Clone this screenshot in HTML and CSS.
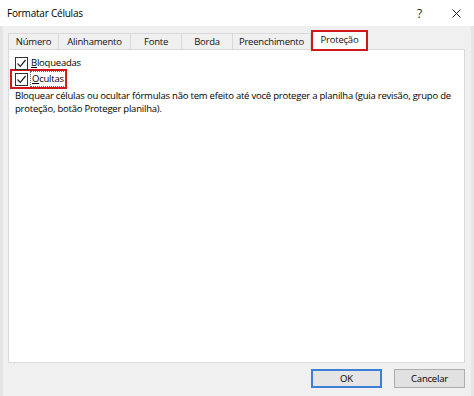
FILE: index.html
```html
<!DOCTYPE html>
<html lang="pt-BR">

<head>
  <meta charset="UTF-8">
  <title>Formatar Células</title>
  <link rel="stylesheet" href="styles.css">
</head>

<body>
  <div class="dialog">
    <div class="titlebar">
      <span class="title">Formatar Células</span>
      <span class="help">?</span>
      <span class="close">
        <svg width="9" height="9" viewBox="0 0 9 9">
          <path d="M0.5 0.5 L8.5 8.5 M8.5 0.5 L0.5 8.5" stroke="#1a1a1a" stroke-width="1" fill="none" />
        </svg>
      </span>
    </div>

    <div class="content">
      <div class="tabs">
        <div class="tab">Número</div>
        <div class="tab">Alinhamento</div>
        <div class="tab">Fonte</div>
        <div class="tab">Borda</div>
        <div class="tab">Preenchimento</div>
        <div class="tab active">Proteção</div>
      </div>

      <div class="panel">
        <div class="option">
          <span class="box">
            <svg width="11" height="11" viewBox="0 0 11 11">
              <path d="M1.5 5.5 L4.2 8.3 L9.6 2" stroke="#222" stroke-width="1.2" fill="none" />
            </svg>
          </span>
          <span class="label"><u>B</u>loqueadas</span>
        </div>
        <div class="option marked">
          <span class="box">
            <svg width="11" height="11" viewBox="0 0 11 11">
              <path d="M1.5 5.5 L4.2 8.3 L9.6 2" stroke="#222" stroke-width="1.2" fill="none" />
            </svg>
          </span>
          <span class="label focus"><u>O</u>cultas</span>
        </div>
        <p class="note">Bloquear células ou ocultar fórmulas não tem efeito até você proteger a planilha (guia revisão, grupo de proteção, botão Proteger planilha).</p>
      </div>

      <div class="buttons">
        <button class="btn default">OK</button>
        <button class="btn">Cancelar</button>
      </div>
    </div>
  </div>
</body>

</html>
```

FILE: styles.css
```css
body {
  margin: 0;
  font-family: "Open Sans", "Noto Sans", sans-serif;
  font-size: 9.5px;
  letter-spacing: -0.22px;
  color: #000000;
  background-color: #ffffff;
}

.dialog {
  width: 474px;
  height: 396px;
  background-color: #f0f0f0;
  box-sizing: border-box;
  border-left: 3px solid #e4e4e4;
  border-right: 3px solid #e6e6e6;
}

.titlebar {
  height: 26px;
  background-color: #ffffff;
  display: flex;
  align-items: center;
  margin: 0 -3px;
  padding-left: 7px;
  font-size: 10px;
}

.title {
  flex: 1;
}

.help {
  width: 7px;
  margin-right: 28px;
  font-size: 12px;
  color: #222;
}

.close {
  width: 9px;
  height: 9px;
  margin-right: 13px;
  display: flex;
}

.content {
  padding: 6px 6px 0 5px;
}

.tabs {
  display: flex;
  align-items: flex-end;
  height: 17px;
}

.tab {
  height: 16px;
  line-height: 15px;
  box-sizing: border-box;
  text-align: center;
  border: 1px solid #d9d9d9;
  border-bottom: none;
  border-right: none;
  background-color: #f0f0f0;
  color: #111;
}

.tab:nth-child(1) { width: 50px; }
.tab:nth-child(2) { width: 72px; }
.tab:nth-child(3) { width: 51px; }
.tab:nth-child(4) { width: 51px; }
.tab:nth-child(5) { width: 79px; border-right: 1px solid #d9d9d9; }

.tab.active {
  width: 57px;
  height: 21px;
  line-height: 16px;
  background-color: #ffffff;
  border: 2px solid #d1161c;
  margin-bottom: -2px;
  position: relative;
  z-index: 1;
}

.panel {
  height: 314px;
  box-sizing: border-box;
  background-color: #ffffff;
  border: 1px solid #d9d9d9;
  padding: 7px 1px 0 6px;
}

.option {
  display: flex;
  align-items: center;
  height: 12px;
  gap: 3px;
}

.option.marked {
  width: 57px;
  height: 20px;
  box-sizing: border-box;
  border: 2px solid #d1161c;
  margin-left: -5px;
  padding-left: 3px;
}

.box {
  width: 13px;
  height: 13px;
  flex: none;
  box-sizing: border-box;
  border: 1px solid #333333;
  display: flex;
  align-items: center;
  justify-content: center;
  background: #ffffff;
}

.label {
  line-height: 14px;
}

.label.focus {
  outline: 1px dotted #666;
  padding: 0 1px;
}

.note {
  margin: 0;
  line-height: 13px;
}

.buttons {
  display: flex;
  justify-content: flex-end;
  gap: 12px;
  padding: 6px 0 0 0;
}

.btn {
  width: 71px;
  height: 19px;
  font-family: inherit;
  font-size: 9.5px;
  letter-spacing: -0.2px;
  background-color: #e1e1e1;
  border: 1px solid #adadad;
  padding: 0;
  color: #000;
}

.btn.default {
  border: 2px solid #3b7fd6;
  background-color: #e5e5e5;
}
```
